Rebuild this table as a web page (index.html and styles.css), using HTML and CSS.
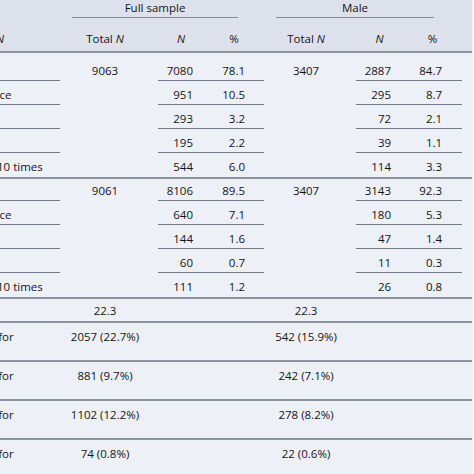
FILE: index.html
```html
<!DOCTYPE html>
<html>
<head>
<meta charset="utf-8">
<link rel="stylesheet" href="styles.css">
</head>
<body>
<table class="tbl">
  <colgroup>
    <col class="c0"><col class="c1"><col class="c2"><col class="c3"><col class="c4"><col class="c5"><col class="c6"><col class="c7">
  </colgroup>
  <thead>
    <tr class="h1">
      <th class="lab"></th>
      <th colspan="3"><div class="spanner">Full sample</div></th>
      <th colspan="3"><div class="spanner male">Male</div></th>
      <th></th>
    </tr>
    <tr class="h2">
      <th class="lab hlab">Frequency, <i>N</i></th>
      <th>Total <i>N</i></th>
      <th><i>N</i></th>
      <th>%</th>
      <th>Total <i>N</i></th>
      <th><i>N</i></th>
      <th>%</th>
      <th></th>
    </tr>
  </thead>
  <tbody>
    <tr class="r1">
      <td class="lab ul">Never</td><td class="tot">9063</td><td class="n ul">7080</td><td class="n ul">78.1</td>
      <td class="tot">3407</td><td class="m ul">2887</td><td class="m ul">84.7</td><td></td>
    </tr>
    <tr>
      <td class="lab ul">Once or twice</td><td class="tot"></td><td class="n ul">951</td><td class="n ul">10.5</td>
      <td class="tot"></td><td class="m ul">295</td><td class="m ul">8.7</td><td></td>
    </tr>
    <tr>
      <td class="lab ul">2–3 times</td><td class="tot"></td><td class="n ul">293</td><td class="n ul">3.2</td>
      <td class="tot"></td><td class="m ul">72</td><td class="m ul">2.1</td><td></td>
    </tr>
    <tr>
      <td class="lab ul">4–10 times</td><td class="tot"></td><td class="n ul">195</td><td class="n ul">2.2</td>
      <td class="tot"></td><td class="m ul">39</td><td class="m ul">1.1</td><td></td>
    </tr>
    <tr class="last">
      <td class="lab">More than 10 times</td><td class="tot"></td><td class="n">544</td><td class="n">6.0</td>
      <td class="tot"></td><td class="m">114</td><td class="m">3.3</td><td></td>
    </tr>
    <tr class="grp">
      <td class="lab ul">Never</td><td class="tot">9061</td><td class="n ul">8106</td><td class="n ul">89.5</td>
      <td class="tot">3407</td><td class="m ul">3143</td><td class="m ul">92.3</td><td></td>
    </tr>
    <tr>
      <td class="lab ul">Once or twice</td><td class="tot"></td><td class="n ul">640</td><td class="n ul">7.1</td>
      <td class="tot"></td><td class="m ul">180</td><td class="m ul">5.3</td><td></td>
    </tr>
    <tr>
      <td class="lab ul">2–3 times</td><td class="tot"></td><td class="n ul">144</td><td class="n ul">1.6</td>
      <td class="tot"></td><td class="m ul">47</td><td class="m ul">1.4</td><td></td>
    </tr>
    <tr>
      <td class="lab ul">4–10 times</td><td class="tot"></td><td class="n ul">60</td><td class="n ul">0.7</td>
      <td class="tot"></td><td class="m ul">11</td><td class="m ul">0.3</td><td></td>
    </tr>
    <tr class="last">
      <td class="lab">More than 10 times</td><td class="tot"></td><td class="n">111</td><td class="n">1.2</td>
      <td class="tot"></td><td class="m">26</td><td class="m">0.8</td><td></td>
    </tr>
    <tr class="grp last">
      <td class="lab">Mean</td><td class="tot">22.3</td><td></td><td></td>
      <td class="tot">22.3</td><td></td><td></td><td></td>
    </tr>
    <tr class="big">
      <td class="lab">Prescribed for<br>pain</td><td class="tot">2057 (22.7%)</td><td></td><td></td>
      <td class="tot">542 (15.9%)</td><td></td><td></td><td></td>
    </tr>
    <tr class="big">
      <td class="lab">Prescribed for<br>sleep</td><td class="tot">881 (9.7%)</td><td></td><td></td>
      <td class="tot">242 (7.1%)</td><td></td><td></td><td></td>
    </tr>
    <tr class="big">
      <td class="lab">Prescribed for<br>anxiety</td><td class="tot">1102 (12.2%)</td><td></td><td></td>
      <td class="tot">278 (8.2%)</td><td></td><td></td><td></td>
    </tr>
    <tr class="big">
      <td class="lab">Prescribed for<br>other</td><td class="tot">74 (0.8%)</td><td></td><td></td>
      <td class="tot">22 (0.6%)</td><td></td><td></td><td></td>
    </tr>
  </tbody>
</table>
</body>
</html>
```

FILE: styles.css
```css
html, body {
  margin: 0;
  padding: 0;
  background: #f3f5f9;
}
body {
  font-family: "Open Sans", "Noto Sans", sans-serif;
  font-size: 11.5px;
  color: #141414;
  overflow: hidden;
  height: 474px;
}
.tbl {
  border-collapse: separate;
  border-spacing: 0;
  table-layout: fixed;
  width: 534px;
  margin: -4px 0 0 -62px;
  background: #edf0f7;
}
.c0 { width: 122px; }
.c1 { width: 98px; }
.c2 { width: 54px; }
.c3 { width: 52px; }
.c4 { width: 92px; }
.c5 { width: 55px; }
.c6 { width: 51px; }
.c7 { width: 10px; }

.tbl th,
.tbl td {
  padding: 6px 0 2px 0;
  line-height: 15px;
  vertical-align: top;
  font-weight: 400;
  white-space: nowrap;
}
.tbl thead th {
  background: #dde1eb;
  text-align: center;
  padding-right: 8px;
}
.tbl thead .h1 th {
  padding-top: 4px;
  padding-bottom: 1px;
}
.spanner {
  margin: 0 18px 0 12px;
  padding-bottom: 2px;
  border-bottom: 1px solid #858b96;
}
.spanner.male {
  margin-right: 20px;
}
.tbl thead .h2 th {
  padding-top: 12px;
  padding-bottom: 5px;
  border-bottom: 2px solid #8c929c;
}
.tbl thead th.lab {
  text-align: left;
  padding-right: 0;
}
.tbl thead th.hlab {
  text-indent: -4px;
}
.tbl td.lab {
  text-align: left;
}
.tbl td.tot {
  text-align: center;
  padding-right: 8px;
}
.tbl td.n {
  text-align: right;
  padding-right: 19px;
}
.tbl td.m {
  text-align: right;
  padding-right: 20px;
}
.tbl td.ul {
  border-bottom: 1px solid #737985;
}
.tbl tr.r1 td {
  padding-top: 10px;
}
.tbl tr.last td {
  padding-bottom: 3px;
}
.tbl tr.grp td {
  border-top: 2px solid #8c929c;
  padding-top: 4px;
}
.tbl tr.big td {
  border-top: 2px solid #8c929c;
  padding-top: 5.5px;
  padding-bottom: 1.5px;
}
```
